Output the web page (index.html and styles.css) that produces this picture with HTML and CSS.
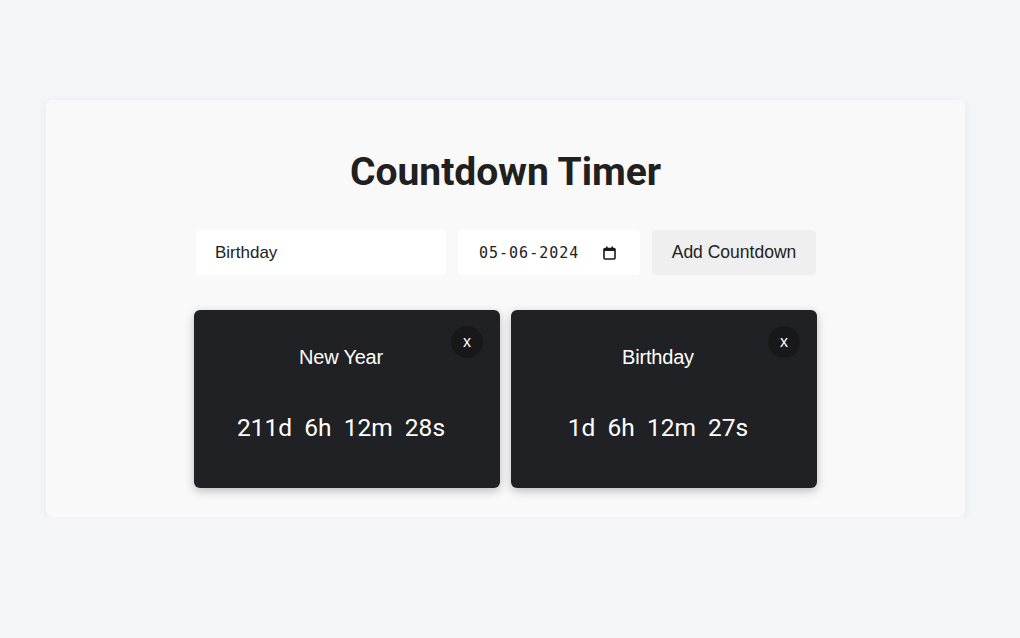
FILE: index.html
```html
<!DOCTYPE html>
<html>
<head>
<meta charset="utf-8">
<link rel="stylesheet" href="styles.css">
</head>
<body>
<div class="page">
  <div class="panel">
    <h1 class="title">Countdown Timer</h1>
    <div class="form-row">
      <input class="text-input" type="text" value="Birthday">
      <div class="date-input">
        <span class="date-text">05-06-2024</span>
        <svg class="cal-icon" width="13" height="14" viewBox="0 0 13 14">
          <rect x="1" y="2.5" width="11" height="10.5" rx="1" fill="none" stroke="#1a1a1a" stroke-width="1.6"/>
          <rect x="1" y="2.5" width="11" height="2.5" fill="#1a1a1a"/>
          <rect x="3" y="0.5" width="1.6" height="2.5" fill="#1a1a1a"/>
          <rect x="8.4" y="0.5" width="1.6" height="2.5" fill="#1a1a1a"/>
        </svg>
      </div>
      <button class="add-btn">Add Countdown</button>
    </div>
    <div class="cards">
      <div class="cd-card">
        <button class="close">x</button>
        <div class="cd-name">New Year</div>
        <div class="cd-time">211d&nbsp; 6h&nbsp; 12m&nbsp; 28s</div>
      </div>
      <div class="cd-card">
        <button class="close">x</button>
        <div class="cd-name">Birthday</div>
        <div class="cd-time">1d&nbsp; 6h&nbsp; 12m&nbsp; 27s</div>
      </div>
    </div>
  </div>
</div>
</body>
</html>
```
FILE: styles.css
```css
html, body {
  margin: 0;
  padding: 0;
  background: #f4f5f8;
  font-family: "Liberation Sans", Arial, sans-serif;
}
.page {
  padding: 100px 55px 0 46px;
}
.panel {
  width: 919px;
  height: 417px;
  box-sizing: border-box;
  background: #f9f9f9;
  border-radius: 6px;
  box-shadow: 0 2px 10px rgba(0, 0, 0, 0.06);
  padding-top: 48px;
  display: flex;
  flex-direction: column;
  align-items: center;
}
.title {
  margin: 0;
  font-family: Roboto, sans-serif;
  font-weight: 700;
  font-size: 39px;
  line-height: 48px;
  color: #202020;
}
.form-row {
  margin-top: 34px;
  display: flex;
  gap: 12px;
  margin-left: 1px;
}
.text-input, .date-input, .add-btn {
  height: 45px;
  box-sizing: border-box;
  border: none;
  border-radius: 4px;
  outline: none;
}
.text-input {
  width: 250px;
  background: #fff;
  padding: 0 19px;
  font-family: "Liberation Sans", Arial, sans-serif;
  font-size: 17px;
  color: #222;
}
.date-input {
  width: 182px;
  background: #fff;
  padding: 0 0 0 21px;
  display: flex;
  align-items: center;
  color: #222;
}
.date-text {
  font-family: "DejaVu Sans Mono", monospace;
  font-size: 15px;
  letter-spacing: 1px;
  width: 124px;
}
.cal-icon {
  display: block;
}
.add-btn {
  width: 164px;
  background: #efefef;
  font-family: "Liberation Sans", Arial, sans-serif;
  font-size: 17.5px;
  color: #222;
  padding: 0;
}
.cards {
  margin-top: 35px;
  display: flex;
  gap: 11px;
}
.cd-card {
  position: relative;
  width: 306px;
  height: 178px;
  box-sizing: border-box;
  background: #202124;
  border-radius: 6px;
  box-shadow: 0 3px 10px rgba(0, 0, 0, 0.25);
  padding: 36px 12px 0 0;
  display: flex;
  flex-direction: column;
  align-items: center;
  color: #fff;
}
.cd-name {
  font-family: "Liberation Sans", Arial, sans-serif;
  font-size: 20px;
  line-height: 22px;
  letter-spacing: -0.2px;
}
.cd-time {
  margin-top: 46px;
  font-family: Roboto, sans-serif;
  font-size: 24.5px;
  line-height: 28px;
}
.close {
  position: absolute;
  top: 16px;
  right: 17px;
  width: 32px;
  height: 32px;
  border-radius: 50%;
  border: none;
  background: #18181a;
  color: #fff;
  font-family: "Liberation Sans", Arial, sans-serif;
  font-size: 16px;
  padding: 0;
  line-height: 30px;
}
```
